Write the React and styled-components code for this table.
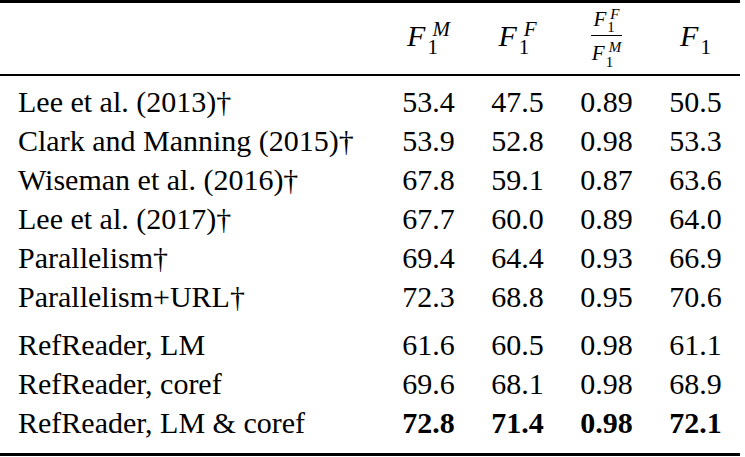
import React from 'react';
import styled, { createGlobalStyle } from 'styled-components';

const GlobalStyle = createGlobalStyle`
  html, body {
    margin: 0;
    padding: 0;
    background: #ffffff;
  }
  body {
    font-family: "Liberation Serif", "Times New Roman", serif;
    color: #000000;
  }
`;

const groups = [
  {
    top: 6,
    bottom: 0,
    rows: [
      { name: 'Lee et al. (2013)†', vals: ['53.4', '47.5', '0.89', '50.5'] },
      { name: 'Clark and Manning (2015)†', vals: ['53.9', '52.8', '0.98', '53.3'] },
      { name: 'Wiseman et al. (2016)†', vals: ['67.8', '59.1', '0.87', '63.6'] },
      { name: 'Lee et al. (2017)†', vals: ['67.7', '60.0', '0.89', '64.0'] },
      { name: 'Parallelism†', vals: ['69.4', '64.4', '0.93', '66.9'] },
      { name: 'Parallelism+URL†', vals: ['72.3', '68.8', '0.95', '70.6'] },
    ],
  },
  {
    top: 9,
    bottom: 11,
    rows: [
      { name: 'RefReader, LM', vals: ['61.6', '60.5', '0.98', '61.1'] },
      { name: 'RefReader, coref', vals: ['69.6', '68.1', '0.98', '68.9'] },
      { name: 'RefReader, LM & coref', vals: ['72.8', '71.4', '0.98', '72.1'], bold: true },
    ],
  },
];

const Table = styled.div`
  width: 740px;
  border-top: 3px solid #000;
  border-bottom: 3px solid #000;
  font-family: "Liberation Serif", "Times New Roman", serif;
  font-size: 30px;
  color: #000;
`;

const Row = styled.div`
  display: grid;
  grid-template-columns: 384px repeat(4, 89px);
  height: 39px;
  line-height: 39px;
`;

const HeaderRow = styled(Row)`
  height: 71px;
  line-height: 66px;
  border-bottom: 2px solid #000;
`;

const Body = styled.div`
  padding-top: ${p => p.$top}px;
  padding-bottom: ${p => p.$bottom}px;
`;

const Label = styled.div`
  padding-left: 18px;
  white-space: nowrap;
`;

const Num = styled.div`
  text-align: center;
  font-weight: ${p => (p.$bold ? 700 : 400)};
`;

const HeadCell = styled.div`
  text-align: center;
  white-space: nowrap;
`;

const Var = styled.span`
  font-style: italic;
  font-size: ${p => p.$size}px;
`;

const Scripts = styled.span`
  display: inline-flex;
  flex-direction: column;
  align-items: flex-start;
  font-size: ${p => p.$size}px;
  line-height: ${p => p.$gap}px;
  vertical-align: ${p => p.$raise}px;
  margin-left: ${p => p.$kern}px;
`;

const Sup = styled.span`
  font-style: italic;
  padding-left: ${p => p.$shift}px;
`;

const Sub = styled.span`
  font-style: normal;
`;

const Frac = styled.span`
  display: inline-flex;
  flex-direction: column;
  align-items: center;
  vertical-align: 20px;
  line-height: 20px;
`;

const Numer = styled.span`
  align-self: stretch;
  text-align: center;
  height: 20px;
  padding-bottom: 9px;
  border-bottom: 1.3px solid #000;
`;

const Denom = styled.span`
  height: 20px;
  padding: 4px 1px 0;
`;

function Score({ size, scriptSize, sup, raise, gap, shift, kern }) {
  return (
    <>
      <Var $size={size}>F</Var>
      <Scripts $size={scriptSize} $gap={sup ? gap : 10} $raise={raise} $kern={kern}>
        {sup && <Sup $shift={shift}>{sup}</Sup>}
        <Sub>1</Sub>
      </Scripts>
    </>
  );
}

export default function App() {
  return (
    <>
      <GlobalStyle />
      <Table>
        <HeaderRow>
          <div />
          <HeadCell>
            <Score size={30} scriptSize={21} sup="M" raise={10} gap={18} shift={5} kern={2} />
          </HeadCell>
          <HeadCell>
            <Score size={30} scriptSize={21} sup="F" raise={10} gap={18} shift={5} kern={2} />
          </HeadCell>
          <HeadCell>
            <Frac>
              <Numer>
                <Score size={21} scriptSize={15} sup="F" raise={7} gap={13} shift={3} kern={1} />
              </Numer>
              <Denom>
                <Score size={21} scriptSize={15} sup="M" raise={8} gap={15} shift={3} kern={1} />
              </Denom>
            </Frac>
          </HeadCell>
          <HeadCell>
            <Score size={30} scriptSize={21} raise={-8} kern={2} />
          </HeadCell>
        </HeaderRow>
        {groups.map((group, i) => (
          <Body key={i} $top={group.top} $bottom={group.bottom}>
            {group.rows.map(row => (
              <Row key={row.name}>
                <Label>{row.name}</Label>
                {row.vals.map((v, j) => (
                  <Num key={j} $bold={row.bold}>{v}</Num>
                ))}
              </Row>
            ))}
          </Body>
        ))}
      </Table>
    </>
  );
}
